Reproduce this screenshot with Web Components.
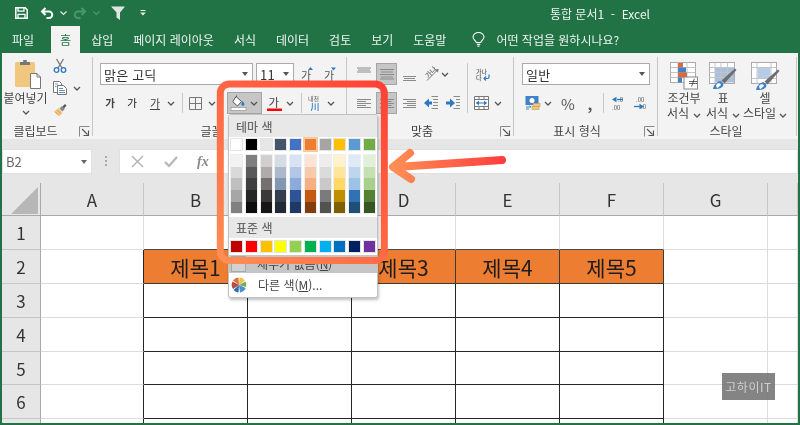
<!DOCTYPE html>
<html lang="ko"><head><meta charset="utf-8"><title>통합 문서1 - Excel</title>
<style>
html,body{margin:0;padding:0;width:800px;height:425px;overflow:hidden;background:#217346}
body{position:relative;display:flex;flex-direction:column;font:12px "Noto Sans CJK KR","Noto Sans",sans-serif;color:#444;filter:blur(.4px)}
</style></head><body>
<x-titlebar></x-titlebar>
<x-tabs></x-tabs>
<x-ribbon>
  <x-group label="클립보드" launcher style="--gw:91px;--pl:1px;--lp:10px">
    <x-row style="--rh:auto;align-items:flex-start;margin-top:-3px">
      <x-col style="--cw:45px;align-items:center">
        <x-icon name="paste" style="margin-left:5px"></x-icon>
        <x-btn style="--h:15px">붙여넣기</x-btn>
        <x-btn style="--h:15px"><x-icon name="chev"></x-icon></x-btn>
      </x-col>
      <x-col style="--gap:8px;margin:-1px 0 0 5px">
        <x-btn style="--h:14px;--w:14px"><x-icon name="cut"></x-icon></x-btn>
        <x-row style="--rh:14px"><x-btn style="--h:14px;--w:14px"><x-icon name="copy"></x-icon></x-btn><x-btn style="--w:10px;--ml:5px;--h:14px"><x-icon name="chev"></x-icon></x-btn></x-row>
        <x-btn style="--h:14px;--w:14px"><x-icon name="painter"></x-icon></x-btn>
      </x-col>
    </x-row>
  </x-group>
  <x-group label="글꼴" style="--gw:254px;--pl:7px;--lp:16px">
    <x-col style="--gap:7px">
      <x-row>
        <x-select style="--w:153px">맑은 고딕</x-select>
        <x-select style="--w:38px;--ml:3px">11</x-select>
        <x-btn style="--w:13px;--ml:7px"><x-icon name="grow"></x-icon></x-btn>
        <x-btn style="--w:13px;--ml:10px"><x-icon name="shrink"></x-icon></x-btn>
      </x-row>
      <x-row>
        <x-btn style="--w:20px;font-size:10.500px;font-weight:700">가</x-btn>
        <x-btn style="--w:24px;font-size:10.500px;font-weight:500">가</x-btn>
        <x-btn style="--w:22px;font-size:11px;text-decoration:underline">가</x-btn>
        <x-btn style="--w:10px"><x-icon name="chev"></x-icon></x-btn>
        <x-sep style="--ml:6px"></x-sep>
        <x-btn style="--w:13px;--ml:6px"><x-icon name="borders"></x-icon></x-btn>
        <x-btn style="--w:10px;--ml:5px"><x-icon name="chev"></x-icon></x-btn>
        <x-btn active style="--w:35px;--ml:10px"><x-icon name="fill"></x-icon><x-icon name="chev" style="margin-left:3px"></x-icon></x-btn>
        <x-btn style="--w:18px;--ml:3px"><x-icon name="fontcolor"></x-icon></x-btn>
        <x-btn style="--w:10px;--ml:2px"><x-icon name="chev"></x-icon></x-btn>
        <x-sep style="--ml:6px"></x-sep>
        <x-btn style="--w:13px;--ml:6px"><x-icon name="phonetic"></x-icon></x-btn>
        <x-btn style="--w:10px;--ml:5px"><x-icon name="chev"></x-icon></x-btn>
      </x-row>
    </x-col>
  </x-group>
  <x-group label="맞춤" launcher style="--gw:167px;--pl:10px;--lp:3px">
    <x-row style="--rh:auto;align-items:flex-start">
      <x-col style="--gap:7px;--cw:110px">
        <x-row>
          <x-btn style="--w:14px"><x-icon name="altop"></x-icon></x-btn>
          <x-btn active style="--w:21px;--ml:5px"><x-icon name="almid"></x-icon></x-btn>
          <x-btn style="--w:13px;--ml:6px"><x-icon name="albot"></x-icon></x-btn>
          <x-btn style="--w:14px;--ml:8px"><x-icon name="orient"></x-icon></x-btn>
          <x-btn style="--w:10px;--ml:2px"><x-icon name="chev"></x-icon></x-btn>
        </x-row>
        <x-row>
          <x-btn style="--w:14px"><x-icon name="alleft"></x-icon></x-btn>
          <x-btn active style="--w:21px;--ml:5px"><x-icon name="alcenter"></x-icon></x-btn>
          <x-btn style="--w:13px;--ml:6px"><x-icon name="alright"></x-icon></x-btn>
          <x-btn style="--w:14px;--ml:8px"><x-icon name="indentdec"></x-icon></x-btn>
          <x-btn style="--w:14px;--ml:8px"><x-icon name="indentinc"></x-icon></x-btn>
        </x-row>
      </x-col>
      <x-sep style="--sh:50px"></x-sep>
      <x-col style="--gap:7px;margin-left:6px">
        <x-row><x-btn style="--w:14px;--ml:2px"><x-icon name="wrap"></x-icon></x-btn></x-row>
        <x-row>
          <x-btn style="--w:15px"><x-icon name="merge"></x-icon></x-btn>
          <x-btn style="--w:10px;--ml:4px"><x-icon name="chev"></x-icon></x-btn>
        </x-row>
      </x-col>
    </x-row>
  </x-group>
  <x-group label="표시 형식" launcher style="--gw:144px;--pl:8px;--lp:4px">
    <x-col style="--gap:7px">
      <x-row><x-select style="--w:128px">일반</x-select></x-row>
      <x-row>
        <x-btn style="--w:15px;--ml:3px"><x-icon name="account"></x-icon></x-btn>
        <x-btn style="--w:10px;--ml:3px"><x-icon name="chev"></x-icon></x-btn>
        <x-btn style="--w:12px;--ml:9px;font-size:15px;color:#555">%</x-btn>
        <x-btn style="--w:12px;--ml:10px;font-size:15px;font-weight:700;color:#555">,</x-btn>
        <x-sep style="--ml:7px"></x-sep>
        <x-btn style="--w:12px;--ml:8px"><x-icon name="decinc"></x-icon></x-btn>
        <x-btn style="--w:12px;--ml:10px"><x-icon name="decdec"></x-icon></x-btn>
      </x-row>
    </x-col>
  </x-group>
  <x-group label="스타일" nosep style="--gw:139px;--pl:6px;--lp:2px">
    <x-row style="--rh:auto;align-items:flex-start;margin-top:-1px">
      <x-style-item style="--w:40px"><x-icon slot="icon" name="condfmt"></x-icon>조건부<br>서식<x-icon name="chev" style="margin-left:4px"></x-icon></x-style-item>
      <x-style-item style="--w:38px"><x-icon slot="icon" name="tablefmt"></x-icon>표<br>서식<x-icon name="chev" style="margin-left:4px"></x-icon></x-style-item>
      <x-style-item style="--w:44px;margin-left:1px"><x-icon slot="icon" name="cellstyle"></x-icon>셀<br>스타일<x-icon name="chev" style="margin-left:3px"></x-icon></x-style-item>
    </x-row>
  </x-group>
</x-ribbon>
<x-formula></x-formula>
<x-sheet></x-sheet>
<x-fill-menu></x-fill-menu>
<x-callout></x-callout>
<x-watermark>고하이IT</x-watermark>

<script>
const G='#8a8a8a',B='#2b79c2';
const L=(ys,x1,x2)=>ys.map((y,i)=>{const a=Array.isArray(x1)?x1[i%x1.length]:x1,b=Array.isArray(x2)?x2[i%x2.length]:x2;return `<path d="M${a} ${y+.5}H${b}" stroke="${G}"/>`}).join('');
const ICONS={
 chev:[8,5,`<path d="M1 1l3 3 3-3" fill="none" stroke="#555" stroke-width="1.3"/>`],
 save:[13,12,`<path d="M.8.8h9.4l2 2v8.4H.8z" fill="none" stroke="#fff" stroke-width="1.5"/><path d="M3 1v3.2h6V1M3 11V7.3h7V11" fill="none" stroke="#fff" stroke-width="1.3"/>`],
 undo:[14,12,`<path d="M5.5 1L2 4.5 5.5 8M2.5 4.5H9a3.2 3.2 0 0 1 0 6.5H6.5" fill="none" stroke="#fff" stroke-width="2"/>`],
 redo:[14,12,`<path d="M8.5 1L12 4.5 8.5 8M11.500 4.5H5a3.2 3.2 0 0 0 0 6.500h2.500" fill="none" stroke="#4b9671" stroke-width="2"/>`],
 wchev:[7,4,`<path d="M.5.5l3 3 3-3" fill="none" stroke="#e4efe9" stroke-width="1.200"/>`],
 dchev:[7,4,`<path d="M.5.5l3 3 3-3" fill="none" stroke="#4b9671" stroke-width="1.200"/>`],
 funnel:[14,14,`<path d="M0 .5h14L9 6.500V14L5.500 11.500V6.500z" fill="#dfe6e2"/>`],
 qat:[6,6,`<path d="M.5 .5h5" stroke="#eee"/><path d="M.2 2.500h5.600L3 5.500z" fill="#eee"/>`],
 bulb:[13,15,`<path d="M4.300 10.500C3.800 8.500 1 7.800 1 5a5.500 4.500 0 0 1 11 0c0 2.800-2.800 3.500-3.300 5.500z" fill="none" stroke="#fff" stroke-width="1.100"/><path d="M4.800 12.300h3.400M5.500 14.200h2" stroke="#fff" stroke-width="1.200"/>`],
 paste:[26,30,`<rect x="0" y="2" width="20" height="25" rx="1.500" fill="#f1c77f"/><path d="M5 5V2h3.200V0h3.600v2H15v3z" fill="#777"/><path d="M15.500 13.500H22l3.500 3.500v11.500h-10z" fill="#fff" stroke="#777"/><path d="M22 13.500v3.500h3.500" fill="none" stroke="#777"/>`],
 cut:[14,14,`<path d="M3.500 0l5.500 9M10.500 0L5 9" stroke="#777" stroke-width="1.300" fill="none"/><circle cx="3.500" cy="11" r="2.300" fill="none" stroke="${B}" stroke-width="1.300"/><circle cx="10.500" cy="11" r="2.300" fill="none" stroke="${B}" stroke-width="1.300"/>`],
 copy:[14,14,`<path d="M.5.500h6l2 2v9h-8z" fill="#fff" stroke="#777"/><path d="M4.500 4.500h6l3 3v6h-9z" fill="#fff" stroke="#777"/><path d="M2 3h3M2 5.500h1.500M6 7.500h4M6 9.500h6M6 11.500h6" stroke="#5f8fc4"/>`],
 painter:[14,14,`<path d="M1 8.500L5.500 5l4 5-3.500 3.500z" fill="#f1c77f"/><path d="M2.500 9l2 2.500M5 7.500l2.500 3" stroke="#cf9a48"/><path d="M6.500 5.500l2.800 3 2.500-2.600-2.800-2.800z" fill="#888"/><path d="M9.500 3.500L12 1l1.500 1.500-2.500 3z" fill="#555"/>`],
 launcher:[11,11,`<path d="M.5 10.500V.5h10" fill="none" stroke="#888"/><path d="M3 3l5.500 5.500M9.500 4.500v5h-5" fill="none" stroke="#555" stroke-width="1.100"/>`],
 grow:[13,17,`<text x="0" y="14" font-size="11" fill="#555">가</text><path d="M9.500 1l2.500 3H7z" fill="${B}"/>`],
 shrink:[13,17,`<text x="0" y="14" font-size="11" fill="#555">가</text><path d="M9.500 4.500L7 1.500h5z" fill="${B}"/>`],
 borders:[13,13,`<path d="M.5.500h12v12H.5zM6.500.500v12M.5 6.500h12" fill="none" stroke="#777"/>`],
 fill:[16,16,`<path d="M5 1.500L10.500 6.500 6.500 11 1.800 6.800z" fill="#fff" stroke="#555"/><path d="M5.500 2V.5" stroke="#555"/><path d="M11.500 6c1.300 1.600 1.900 2.500 1.900 3.300a1.500 1.500 0 0 1-3 0c0-.8.500-1.700 1.100-3.300z" fill="${B}"/><rect x="0" y="12.500" width="15" height="3" fill="#fff" stroke="#888" stroke-width=".6"/>`],
 fontcolor:[15,18,`<text x="1.500" y="13" font-size="11.500" fill="#444">가</text><rect y="14.500" width="15" height="2.500" fill="#ff0000"/>`],
 phonetic:[13,18,`<text x="0" y="7" font-size="6" font-weight="500" fill="#777">내천</text><text x="2.500" y="16" font-size="9" font-weight="500" fill="${B}">川</text>`],
 altop:[14,22,L([4.500,6.500,8.500],[0,1],[14,13])],
 almid:[14,22,L([6,8.500,11,13.500,15.500],[0,1],[14,13])],
 albot:[13,22,L([13,15,17],[0,1],[13,12])],
 alleft:[14,22,L([7,9,11,13,15],0,[14,9])],
 alcenter:[14,22,L([7,9,11,13,15],[0,2.500],[14,11.500])],
 alright:[13,22,L([7,9,11,13,15],[0,4],13)],
 orient:[15,20,`<g transform="rotate(-45 7 9)"><text x="1" y="11" font-size="7" font-weight="500" fill="#666">가나</text></g><path d="M3 16.500L14 5.500" stroke="#777"/><path d="M14.500 5l-3.500.5 3 3z" fill="#777"/>`],
 indentdec:[14,14,`<path d="M7.500 .5H14M9 3.500h5M9 6.500h5M9 9.500h5M7.500 12.500H14" stroke="${G}"/><path d="M5 2.500v3h3v3H5v3L0 7z" fill="${B}"/>`],
 indentinc:[14,14,`<path d="M7.500 .5H14M10 3.500h4M10 6.500h4M10 9.500h4M7.500 12.500H14" stroke="${G}"/><path d="M4 2.500v3H0v3h4v3L9 7z" fill="${B}"/>`],
 wrap:[14,13,`<text x="0" y="5.500" font-size="6" font-weight="500" fill="#555">가나</text><text x="0" y="12" font-size="6" font-weight="500" fill="#555">다</text><path d="M13 6.500v2.500a1.500 1.500 0 0 1-1.500 1.500H8M10 8.500l-2 2 2 2" fill="none" stroke="${B}" stroke-width="1.200"/>`],
 merge:[15,14,`<path d="M.5.5h14v13H.5zM.5 3.500h14M.5 10.500h14M5 .5v3M10 .5v3M5 10.500v3M10 10.500v3" fill="#fff" stroke="#777"/><path d="M2.500 7h10" stroke="${B}"/><path d="M5 4.500L2 7l3 2.500zM10 4.500L13 7l-3 2.500z" fill="${B}"/>`],
 account:[15,15,`<rect x=".5" y="0" width="13" height="9" fill="#3f82c6"/><circle cx="7" cy="4.500" r="2.500" fill="#fff"/><rect x="8" y="7.500" width="7" height="3" fill="#f1c77f" stroke="#c79a52" stroke-width=".6"/><rect x="7" y="10.500" width="7" height="3" fill="#f1c77f" stroke="#c79a52" stroke-width=".6"/><path d="M1 11h5l-1.500-1.500M1 13h3" stroke="#3f82c6" fill="none"/>`],
 decinc:[12,14,`<path d="M5 3.500h6" stroke="${B}" stroke-width="1.300"/><path d="M4.500 .8v5.400L0 3.500z" fill="${B}"/><text x="6" y="5.800" font-size="6" fill="#555">.0</text><text x="0" y="13.500" font-size="6" fill="#555">.00</text>`],
 decdec:[12,14,`<text x="2" y="5.800" font-size="6" fill="#555">.00</text><path d="M0 10.500h6" stroke="${B}" stroke-width="1.300"/><path d="M5.500 7.800v5.400L10 10.500z" fill="${B}"/><text x="7" y="13" font-size="6" fill="#555">.0</text>`],
 condfmt:[28,28,`<rect x=".5" y=".5" width="25" height="20" fill="#fff" stroke="#aaa"/><path d="M8 .5v20M17 .5v20M.5 5.500h25M.5 10.500h25M.5 15.500h25" stroke="#c4c4c4" fill="none"/><rect x="8" y="1" width="5" height="4.500" fill="#e0683a"/><rect x="8" y="5.500" width="8" height="5" fill="#3f82c6"/><rect x="8" y="10.500" width="9" height="5" fill="#e0683a"/><rect x="8" y="15.500" width="4" height="5" fill="#3f82c6"/><rect x="14" y="15" width="13.500" height="12" fill="#fff" stroke="#888"/><text x="17.500" y="25" font-size="11" fill="#333">≠</text>`],
 tablefmt:[28,28,`<rect x=".5" y=".5" width="25" height="21" fill="#fff" stroke="#aaa"/><rect x="6" y="5.500" width="19" height="15" fill="#a9bfdc"/><path d="M6 .5v21M12 .5v21M18.500 .5v21M.5 5.500h25M.5 10.500h25M.5 15.500h25" stroke="#c4c4c4" fill="none"/><path d="M4 27c.5-3 2-6 7-8 3 1 4 3 3 5-2 3-6 3-10 3z" fill="#3f82c6"/><path d="M8.500 26a2.500 2.500 0 1 1 3.500-3z" fill="#fff"/><path d="M12.500 18.500L26 6.500l1.500 1.500-12 13.500z" fill="#6e6e6e"/>`],
 cellstyle:[29,29,`<rect x=".5" y=".5" width="25" height="21" fill="#fff" stroke="#aaa"/><path d="M6 .5v21M20 .5v21M.5 5.500h25M.5 16.500h25" stroke="#c4c4c4" fill="none"/><rect x="6.500" y="6" width="13" height="10" fill="#b7cde6"/><path d="M5 28c.5-3 2-6 7-8 3 1 4 3 3 5-2 3-6 3-10 3z" fill="#3f82c6"/><path d="M9.500 27a2.500 2.500 0 1 1 3.500-3z" fill="#fff"/><path d="M13.500 19.500L27 7.500l1.500 1.500-12 13.500z" fill="#6e6e6e"/>`],
 pie:[16,16,`<path d="M8 8L2 3.500A7.500 7.500 0 0 1 7.500 .6z" fill="#e0713c"/><path d="M8 8L8.500 .6A7.500 7.500 0 0 1 14 3.500z" fill="#f2c14a"/><path d="M8 8L14.500 4.500A7.500 7.500 0 0 1 15 10z" fill="#75ac5c"/><path d="M8 8L14.700 11A7.500 7.500 0 0 1 9 15.500z" fill="#4d8fcb"/><path d="M8 8L7.500 15.500A7.500 7.500 0 0 1 2.500 13z" fill="#2d6cb2"/><path d="M8 8L2 12A7.500 7.500 0 0 1 1.500 4.500z" fill="#b14f47"/>`],
 xmark:[13,13,`<path d="M1 1l11 11M12 1L1 12" stroke="#b5b5b5" stroke-width="1.500"/>`],
 check:[14,13,`<path d="M1 7l4 4 8-9" fill="none" stroke="#b5b5b5" stroke-width="2.200"/>`]
};
const def=(n,css,html,init)=>customElements.define(n,class extends HTMLElement{
  connectedCallback(){ if(this.shadowRoot)return; const s=this.attachShadow({mode:'open'});
    s.innerHTML=`<style>${css}</style>${typeof html==='function'?html(this):html}`; init&&init(this,s);} });

def('x-icon',`:host{display:inline-flex;flex:none;line-height:0}svg{display:block;overflow:visible;font-family:inherit}`,
  h=>{const [w,hh,b]=ICONS[h.getAttribute('name')];return `<svg xmlns="http://www.w3.org/2000/svg" width="${w}" height="${hh}" viewBox="0 0 ${w} ${hh}">${b}</svg>`});
def('x-row',`:host{display:flex;align-items:center;height:var(--rh,22px)}`,`<slot></slot>`);
def('x-col',`:host{display:flex;flex-direction:column;gap:var(--gap,0);width:var(--cw,auto);flex:none}`,`<slot></slot>`);
def('x-sep',`:host{display:block;flex:none;width:1px;height:var(--sh,20px);background:#c9c9c9;margin-left:var(--ml,0)}`,``);
def('x-btn',`:host{display:inline-flex;flex:none;align-items:center;justify-content:center;box-sizing:border-box;width:var(--w,auto);height:var(--h,22px);margin-left:var(--ml,0);white-space:nowrap;line-height:1}
 :host([active]){background:#c6c6c6;border:1px solid #a5a5a5}`,`<slot></slot>`);
def('x-select',`:host{display:flex;flex:none;align-items:center;box-sizing:border-box;width:var(--w);height:22px;margin-left:var(--ml,0);background:#fff;border:1px solid #ababab;padding:0 4px 0 3px;font-size:13px;color:#333;letter-spacing:.2px}
 slot{display:block;flex:1}i{width:0;height:0;border:3.500px solid transparent;border-top:4px solid #555;border-bottom:0}`,`<slot></slot><i></i>`);
def('x-style-item',`:host{display:flex;flex-direction:column;align-items:center;flex:none;width:var(--w);line-height:15px;text-align:center;white-space:nowrap}
 .i{height:28px;display:flex;justify-content:center}.t{display:block}`,`<div class="i"><slot name="icon"></slot></div><div class="t"><slot></slot></div>`);

def('x-titlebar',`:host{display:flex;align-items:center;height:26px;flex:none;color:#eef5f1;padding-left:15px;box-sizing:border-box;font-size:12px}
 .t{margin-left:auto;margin-right:150px;white-space:pre}`,
 `<x-icon name="save"></x-icon><x-icon style="margin-left:12px" name="undo"></x-icon><x-icon name="wchev" style="margin-left:6px"></x-icon>
  <x-icon name="redo" style="margin-left:6px"></x-icon><x-icon name="dchev" style="margin-left:6px"></x-icon><x-icon name="funnel" style="margin-left:11px"></x-icon><x-icon name="qat" style="margin-left:15px"></x-icon>
  <span class="t">통합 문서1  -  Excel</span>`);
def('x-tabs',`:host{display:flex;align-items:center;height:27px;flex:none;color:#eef5f1;padding-left:2px;font-size:12px;box-sizing:border-box;white-space:nowrap}
 span{display:flex;align-items:center;height:100%;padding:0 10px}
 .on{background:#f3f3f3;color:#217346;padding:0 9px;margin:0 1px 0 7px}
 .q{padding:0}x-icon{margin-left:16px;margin-right:11px}`,
 `<span>파일</span><span class="on">홈</span><span>삽입</span><span>페이지 레이아웃</span><span>서식</span><span>데이터</span><span>검토</span><span>보기</span><span>도움말</span><x-icon name="bulb"></x-icon><span class="q">어떤 작업을 원하시나요?</span>`);
def('x-ribbon',`:host{display:flex;height:86px;flex:none;margin:0 2px;background:#f3f3f3;padding-top:4px;box-sizing:border-box}`,`<slot></slot>`);
def('x-group',`:host{display:flex;flex-direction:column;flex:none;box-sizing:border-box;width:var(--gw);height:79px;border-right:1px solid #c6c6c6;color:#444}
 .c{flex:1;padding:6px 0 0 var(--pl,0);min-height:0}
 .l{display:flex;align-items:center;height:16px;margin-bottom:-3px;flex:none;color:#444;line-height:16px}
 .l span{flex:1;text-align:center;padding-right:var(--lp,0);white-space:nowrap}
 x-icon{margin-right:2px}`,
 h=>`<div class="c"><slot></slot></div><div class="l"><span>${h.getAttribute('label')}</span>${h.hasAttribute('launcher')?'<x-icon name="launcher"></x-icon>':''}</div>`);
def('x-formula',`:host{display:flex;height:44px;flex:none;margin:0 2px;background:#e6e6e6;padding-top:10px;box-sizing:border-box;align-items:flex-start}
 .n,.f{height:25px;background:#fff;display:flex;align-items:center;box-sizing:border-box;border:1px solid #e0e0e0}
 .n{width:90px;padding:0 4px 0 3px;font-size:13px;color:#666;justify-content:space-between}
 i{width:0;height:0;border:3.500px solid transparent;border-top:4px solid #666;border-bottom:0}
 .d{width:2px;height:11px;margin:7px 12px 0 13px;background:repeating-linear-gradient(#aaa 0 2px,transparent 2px 4px)}
 .f{flex:1;padding-left:11px}
 .fx{font:italic 700 14px "Liberation Serif",serif;color:#8a8a8a;margin-left:19px}`,
 `<div class="n">B2<i></i></div><div class="d"></div><div class="f"><x-icon name="xmark"></x-icon><x-icon name="check" style="margin-left:20px"></x-icon><span class="fx">fx</span></div>`);
def('x-sheet',`:host{display:grid;flex:none;margin:0 2px;height:240px;overflow:hidden;background:#fff;
   grid-template-columns:39px 103px repeat(6,104px) 30px;grid-template-rows:33px 34px 34px 34px 34px 33px 34px 4px;color:#333}
 div{box-sizing:border-box;border-right:1px solid #dcdcdc;border-bottom:1px solid #dcdcdc;display:flex;align-items:center;justify-content:center;min-width:0;overflow:hidden}
 .h{background:#e6e6e6;border-color:#c6c6c6;font-size:17px;color:#333}
 .ch{border-bottom-color:#a9a9a9}.rh{border-right-color:#a9a9a9}
 .t{border-color:#262626}.o{background:#ed7d31;font-size:21px;color:#1d1d1d;border-color:#3b3b3b}
 .br{border-right-color:#262626}.bb{border-bottom-color:#4a4a4a}.last{border-bottom:0}
 svg{display:block}`,``,(h,s)=>{
   const cols=['','A','B','C','D','E','F','G',''];let out='';
   const titles={2:'제목1',3:'제목2',4:'제목3',5:'제목4',6:'제목5'};
   for(let r=0;r<8;r++)for(let c=0;c<9;c++){
     const last=r===7?' last':'';
     if(r===0&&c===0){out+=`<div class="h ch rh"><svg width="38" height="33"><path d="M36 4V31H9z" fill="#b7b7b7"/></svg></div>`;continue}
     if(r===0){out+=`<div class="h ch">${cols[c]}</div>`;continue}
     if(c===0){out+=`<div class="h rh${last}">${r<7?r:''}</div>`;continue}
     if(c>=2&&c<=6){
       if(r===2)out+=`<div class="o">${titles[c]}</div>`;
       else if(r===1)out+=`<div class="bb"></div>`;
       else out+=`<div class="t${last}"></div>`;
     }else out+=`<div class="${c===1&&r>=2?'br':''}${last}"></div>`;
   }
   s.innerHTML+=out;
 });
const THEME=[['FFFFFF','F2F2F2','D9D9D9','BFBFBF','A6A6A6','808080'],['000000','7F7F7F','595959','3F3F3F','262626','0D0D0D'],['E7E6E6','D0CECE','AFABAB','757070','3A3838','171616'],['44546A','D6DCE4','ADB9CA','8497B0','333F4F','222B35'],['4472C4','D9E2F3','B4C6E7','8EAADB','2F5496','1F3864'],['ED7D31','FBE4D5','F7CAAC','F4B083','C45911','833C0B'],['A5A5A5','EDEDED','DBDBDB','C9C9C9','7B7B7B','525252'],['FFC000','FFF2CC','FFE599','FFD966','BF8F00','7F6000'],['5B9BD5','DEEAF6','BDD6EE','9CC2E5','2E74B5','1F4E79'],['70AD47','E2EFD9','C5E0B3','A8D08D','538135','375623']];
const STD=['C00000','FF0000','FFC000','FFFF00','92D050','00B050','00B0F0','0070C0','002060','7030A0'];
def('x-fill-menu',`:host{position:absolute;left:228px;top:114px;width:150px;height:184px;box-sizing:border-box;background:#fff;border:1px solid #c2c2c2;border-radius:3px;box-shadow:1px 2px 3px rgba(0,0,0,.25);color:#666;overflow:hidden;display:flex;flex-direction:column}
 .hd{background:#e8e8e8;display:flex;align-items:center;padding-left:7px;font-weight:500;color:#6a6a6a;flex:none}
 .g{display:grid;grid-template-columns:repeat(10,11px);column-gap:3.750px;padding-left:2px;flex:none}
 .s{height:11px;box-shadow:0 0 0 1px #e4e4e4}.sel{box-shadow:0 0 0 2px #f8c99a}
 .p{height:11.700px}.pc{box-shadow:0 0 0 1px #eee}
 .it{display:flex;align-items:center;flex:none;color:#444}
 u{text-decoration:underline}
 .bx{width:15px;height:16px;border:1px solid #a8a8a8;box-sizing:border-box;margin:0 11px 0 2px;background:#d2d2d2}
 .it x-icon{margin:0 11px 0 2px}`,
 `<div class="hd" style="height:22px">테마 색</div>
  <div class="g" style="margin-top:2px">${THEME.map((c,i)=>`<div class="s${i===5?' sel':''}" style="background:#${c[0]}"></div>`).join('')}</div>
  <div class="g" style="margin-top:5px">${THEME.map(c=>`<div class="pc">${c.slice(1).map(x=>`<div class="p" style="background:#${x}"></div>`).join('')}</div>`).join('')}</div>
  <div class="hd" style="height:21px;margin-top:3.500px">표준 색</div>
  <div class="g" style="margin-top:3px">${STD.map(c=>`<div class="s" style="background:#${c}"></div>`).join('')}</div>
  <div class="it" style="height:18px;margin-top:3px;background:#c6c6c6"><span class="bx"></span><span>채우기 없음(<u>N</u>)</span></div>
  <div class="it" style="height:24px"><x-icon name="pie"></x-icon><span>다른 색(<u>M</u>)...</span></div>`);
def('x-callout',`:host{position:absolute;left:0;top:0;width:800px;height:425px;pointer-events:none}svg{display:block}`,
 `<svg width="800" height="425" viewBox="0 0 800 425" fill="none">
  <defs><linearGradient id="a" gradientUnits="userSpaceOnUse" x1="220" y1="262" x2="384" y2="84"><stop offset="0" stop-color="#ff8f55"/><stop offset="1" stop-color="#ff4135"/></linearGradient>
  <linearGradient id="b" gradientUnits="userSpaceOnUse" x1="392" y1="167" x2="503" y2="160"><stop offset="0" stop-color="#ff8f55"/><stop offset="1" stop-color="#ff3f3f"/></linearGradient></defs>
  <rect x="220.300" y="84" width="164" height="176.500" rx="9" stroke="url(#a)" stroke-width="7"/>
  <path d="M502 160L396 167M410 153L393 167L411 179" stroke="url(#b)" stroke-width="8" stroke-linecap="round" stroke-linejoin="round"/></svg>`);
def('x-watermark',`:host{position:absolute;left:722px;top:373px;width:53px;height:27px;background:rgba(115,115,115,.88);color:#cfcfcf;font-size:12px;display:flex;align-items:center;justify-content:center;letter-spacing:.5px;white-space:nowrap}`,`<slot></slot>`);
</script>
</body></html>
